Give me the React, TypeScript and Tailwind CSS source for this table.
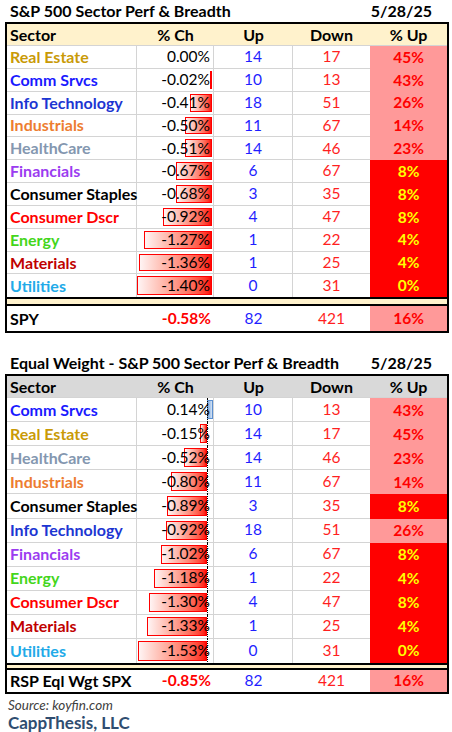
import React from 'react';

type Row = { name: string; color: string; ch: number; up: number; down: number; pct: number };

const sp500: Row[] = [
  { name: 'Real Estate', color: 'text-[#c99a06]', ch: 0.0, up: 14, down: 17, pct: 45 },
  { name: 'Comm Srvcs', color: 'text-[#1a1aff]', ch: -0.02, up: 10, down: 13, pct: 43 },
  { name: 'Info Technology', color: 'text-[#1c35d2]', ch: -0.41, up: 18, down: 51, pct: 26 },
  { name: 'Industrials', color: 'text-[#ed7d31]', ch: -0.5, up: 11, down: 67, pct: 14 },
  { name: 'HealthCare', color: 'text-[#8497b0]', ch: -0.51, up: 14, down: 46, pct: 23 },
  { name: 'Financials', color: 'text-[#9b3cf0]', ch: -0.67, up: 6, down: 67, pct: 8 },
  { name: 'Consumer Staples', color: 'text-black', ch: -0.68, up: 3, down: 35, pct: 8 },
  { name: 'Consumer Dscr', color: 'text-[#ff0000]', ch: -0.92, up: 4, down: 47, pct: 8 },
  { name: 'Energy', color: 'text-[#44d61c]', ch: -1.27, up: 1, down: 22, pct: 4 },
  { name: 'Materials', color: 'text-[#c00000]', ch: -1.36, up: 1, down: 25, pct: 4 },
  { name: 'Utilities', color: 'text-[#22aae8]', ch: -1.4, up: 0, down: 31, pct: 0 },
];

const eqWeight: Row[] = [
  { name: 'Comm Srvcs', color: 'text-[#1a1aff]', ch: 0.14, up: 10, down: 13, pct: 43 },
  { name: 'Real Estate', color: 'text-[#c99a06]', ch: -0.15, up: 14, down: 17, pct: 45 },
  { name: 'HealthCare', color: 'text-[#8497b0]', ch: -0.52, up: 14, down: 46, pct: 23 },
  { name: 'Industrials', color: 'text-[#ed7d31]', ch: -0.8, up: 11, down: 67, pct: 14 },
  { name: 'Consumer Staples', color: 'text-black', ch: -0.89, up: 3, down: 35, pct: 8 },
  { name: 'Info Technology', color: 'text-[#1c35d2]', ch: -0.92, up: 18, down: 51, pct: 26 },
  { name: 'Financials', color: 'text-[#9b3cf0]', ch: -1.02, up: 6, down: 67, pct: 8 },
  { name: 'Energy', color: 'text-[#44d61c]', ch: -1.18, up: 1, down: 22, pct: 4 },
  { name: 'Consumer Dscr', color: 'text-[#ff0000]', ch: -1.3, up: 4, down: 47, pct: 8 },
  { name: 'Materials', color: 'text-[#c00000]', ch: -1.33, up: 1, down: 25, pct: 4 },
  { name: 'Utilities', color: 'text-[#22aae8]', ch: -1.53, up: 0, down: 31, pct: 0 },
];

const cols = 'grid grid-cols-[130px_77px_79px_77px_77px]';
const grid = 'border-r border-b border-[#d4d4d4]';

const pctClass = (p: number) =>
  p < 10 ? 'bg-[#ff0000] text-[#ffff00]' : 'bg-[#ff9999] text-[#ff0000]';

const fmt = (v: number) => v.toFixed(2) + '%';

// data bar inside the % Ch cell; axis = right edge (table 1) or dotted line (table 2)
const Bar = ({ v, scale, axis }: { v: number; scale: number; axis?: number }) => {
  const w = Math.max(Math.abs(v) * scale, v === 0 ? 0 : 1);
  if (w === 0) return null;
  if (axis === undefined) {
    return (
      <div
        className="absolute right-[1px] top-[2px] bottom-[2px] border border-[#ff0000] bg-linear-to-r from-[#fff4f4] to-[#ff0000]"
        style={{ width: w }}
      />
    );
  }
  if (v >= 0) {
    return (
      <div
        className="absolute top-[2px] bottom-[2px] border border-[#5b8fd0] bg-linear-to-r from-[#7aa6dc] to-[#d6e4f5]"
        style={{ left: axis, width: w }}
      />
    );
  }
  return (
    <div
      className="absolute top-[2px] bottom-[2px] border border-[#ff0000] bg-linear-to-r from-[#fff4f4] to-[#ff0000]"
      style={{ right: 76 - axis, width: w }}
    />
  );
};

type TableProps = {
  title: string;
  head: string;
  rowH: string;
  rows: Row[];
  total: { name: string; ch: number; up: number; down: number; pct: number };
  totalH: string;
  sep: string;
  scale: number;
  axis?: number;
};

const SectorTable = ({ title, head, rowH, rows, total, totalH, sep, scale, axis }: TableProps) => (
  <div>
    <div className="h-[22px] flex items-center justify-between pl-[10px] pr-[20px] font-bold text-[16px] text-black">
      <span>{title}</span>
      <span>5/28/25</span>
    </div>
    <div className="ml-[5px] w-[444px] border-2 border-black">
      <div className={`${cols} h-[22px] ${head} border-b border-[#d4d4d4] font-bold text-[16px] text-black`}>
        <div className="flex items-center pl-[3px]">Sector</div>
        <div className="flex items-center justify-center">% Ch</div>
        <div className="flex items-center justify-center">Up</div>
        <div className="flex items-center justify-center">Down</div>
        <div className="flex items-center justify-center">% Up</div>
      </div>
      {rows.map((r, i) => (
        <div key={r.name} className={`${cols} ${rowH} text-[15.5px]`}>
          <div className={`flex items-center pl-[3px] font-bold text-[16px] whitespace-nowrap ${r.color} ${i === rows.length - 1 ? 'border-r border-[#d4d4d4]' : grid}`}>
            {r.name}
          </div>
          <div className={`relative flex items-center justify-end pr-[3px] text-black ${i === rows.length - 1 ? 'border-r border-[#d4d4d4]' : grid}`}>
            <Bar v={r.ch} scale={scale} axis={axis} />
            {axis !== undefined && (
              <div className="absolute left-[70px] top-0 -bottom-px border-l border-dotted border-black" />
            )}
            <span className="relative">{fmt(r.ch)}</span>
          </div>
          <div className={`flex items-center justify-center text-[#1f1fff] ${i === rows.length - 1 ? 'border-r border-[#d4d4d4]' : grid}`}>
            {r.up}
          </div>
          <div className={`flex items-center justify-center text-[#ff1f1f] ${i === rows.length - 1 ? '' : 'border-b border-[#d4d4d4]'}`}>
            {r.down}
          </div>
          <div className={`flex items-center justify-center font-bold ${pctClass(r.pct)}`}>{r.pct}%</div>
        </div>
      ))}
      <div className={`${sep} border-y-2 border-black bg-[#fff2cc]`} />
      <div className={`${cols} ${totalH} text-[15.5px]`}>
        <div className="flex items-center pl-[3px] font-bold text-[16px] text-black whitespace-nowrap">{total.name}</div>
        <div className="flex items-center justify-end pr-[3px] font-bold text-[#ff0000]">{fmt(total.ch)}</div>
        <div className="flex items-center justify-center text-[#1f1fff]">{total.up}</div>
        <div className="flex items-center justify-center text-[#ff1f1f]">{total.down}</div>
        <div className={`flex items-center justify-center font-bold ${pctClass(total.pct)}`}>{total.pct}%</div>
      </div>
    </div>
  </div>
);

export default function App() {
  return (
    <div className="w-[452px] h-[732px] bg-white font-['Lato','Liberation_Sans',sans-serif] leading-none overflow-hidden">
      <SectorTable
        title="S&P 500 Sector Perf & Breadth"
        head="bg-[#fff2cc]"
        rowH="h-[22.85px]"
        rows={sp500}
        total={{ name: 'SPY', ch: -0.58, up: 82, down: 421, pct: 16 }}
        totalH="h-[25px]"
        sep="h-[9px]"
        scale={53.6}
      />
      <div className="h-[19px]" />
      <SectorTable
        title="Equal Weight - S&P 500 Sector Perf & Breadth"
        head="bg-[#d9d9d9]"
        rowH="h-[24.05px]"
        rows={eqWeight}
        total={{ name: 'RSP Eql Wgt SPX', ch: -0.85, up: 82, down: 421, pct: 16 }}
        totalH="h-[22px]"
        sep="h-[7px]"
        scale={45}
        axis={70}
      />
      <div className="pl-[8px] pt-[5px] italic text-[13.5px] text-[#404040]">Source: koyfin.com</div>
      <div className="pl-[8px] pt-[1px] font-bold text-[17px] leading-[20px] text-[#2f4d70]">CappThesis, LLC</div>
    </div>
  );
}
